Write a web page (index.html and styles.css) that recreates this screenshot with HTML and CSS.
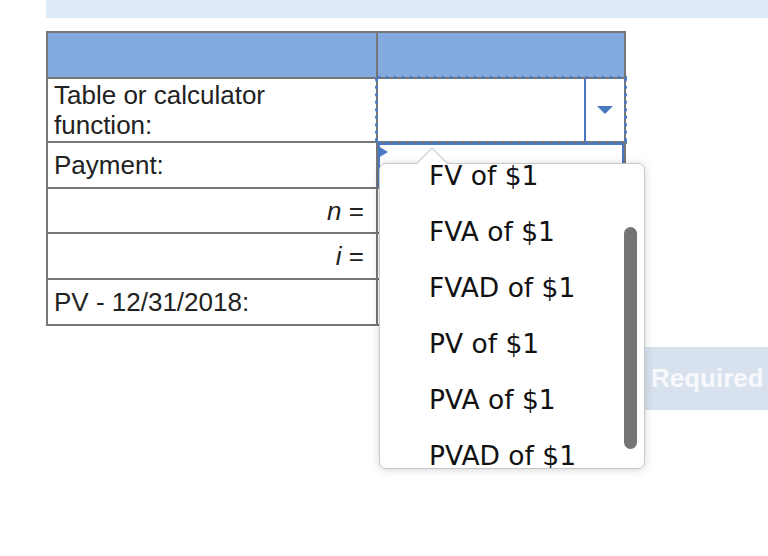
FILE: index.html
```html
<!DOCTYPE html>
<html>
<head>
<meta charset="utf-8">
<link rel="stylesheet" href="styles.css">
</head>
<body>
<div class="band"></div>
<div class="main">
  <div class="sheet">
    <div class="cell head"></div>
    <div class="cell head"></div>

    <div class="cell label">Table or calculator<br>function:</div>
    <div class="cell field top">
      <div class="select">
        <div class="select-value"></div>
        <div class="select-arrow"><span class="tri"></span></div>
        <span class="focus-ring"></span>
      </div>
    </div>

    <div class="cell label">Payment:</div>
    <div class="cell field">
      <div class="input active"><span class="flag"></span></div>
    </div>

    <div class="cell label right"><i>n</i>&nbsp;=</div>
    <div class="cell field"></div>

    <div class="cell label right"><i>i</i>&nbsp;=</div>
    <div class="cell field"></div>

    <div class="cell label">PV - 12/31/2018:</div>
    <div class="cell field"></div>
  </div>
  <button class="required">Required</button>
</div>

<div class="dropdown">
  <span class="caret"></span>
  <ul class="options">
    <li>FV of $1</li>
    <li>FVA of $1</li>
    <li>FVAD of $1</li>
    <li>PV of $1</li>
    <li>PVA of $1</li>
    <li>PVAD of $1</li>
  </ul>
  <span class="thumb"></span>
</div>
</body>
</html>
```

FILE: styles.css
```css
html, body {
  margin: 0;
  padding: 0;
  overflow: hidden;
  background: #ffffff;
}

body {
  width: 768px;
  height: 556px;
  font-family: "Liberation Sans", Arial, sans-serif;
}

.band {
  margin-left: 46px;
  height: 18px;
  background: #deebf7;
}

.main {
  display: flex;
  align-items: flex-start;
  margin-top: 13px;
}

.sheet {
  flex-shrink: 0;
  margin-left: 46px;
  display: grid;
  grid-template-columns: 330px 248px;
  grid-template-rows: 46px 64px 46px 45px 46px 46px;
  border-top: 2px solid #767676;
  border-left: 2px solid #767676;
}

.cell {
  box-sizing: border-box;
  border-right: 2px solid #767676;
  border-bottom: 2px solid #767676;
  background: #ffffff;
}

.head {
  background: #82aadf;
}

.label {
  display: flex;
  align-items: center;
  padding: 0 6px;
  font-size: 26px;
  line-height: 30px;
  color: #222222;
}

.label.right {
  justify-content: flex-end;
  padding-right: 12px;
}

.field {
  position: relative;
}

.field.top {
  z-index: 2;
}

.select {
  position: relative;
  display: flex;
  height: 100%;
  background: #ffffff;
}

.focus-ring {
  position: absolute;
  left: -3px;
  top: -3px;
  width: 252px;
  height: 68px;
  pointer-events: none;
  background:
    radial-gradient(circle, #4a78c2 1.4px, rgba(74, 120, 194, 0) 2px) left top / 8px 3px repeat-x,
    radial-gradient(circle, #4a78c2 1.4px, rgba(74, 120, 194, 0) 2px) left bottom / 8px 3px repeat-x,
    radial-gradient(circle, #4a78c2 1.4px, rgba(74, 120, 194, 0) 2px) left top / 3px 7.5px repeat-y,
    radial-gradient(circle, #4a78c2 1.4px, rgba(74, 120, 194, 0) 2px) right top / 3px 7.5px repeat-y;
}

.select-value {
  flex: 1;
}

.select-arrow {
  width: 38px;
  border-left: 2px solid #4a78c2;
  display: flex;
  align-items: center;
  justify-content: center;
}

.tri {
  width: 0;
  height: 0;
  border-left: 8px solid transparent;
  border-right: 8px solid transparent;
  border-top: 8px solid #4a78c2;
}

.input {
  position: relative;
  box-sizing: border-box;
  height: 100%;
  border: 2px solid #4a78c2;
  border-bottom: none;
}

.flag {
  position: absolute;
  left: -2px;
  top: 1px;
  width: 0;
  height: 0;
  border-top: 6px solid transparent;
  border-bottom: 6px solid transparent;
  border-left: 10px solid #4a78c2;
}

.required {
  flex-shrink: 0;
  margin-left: 14px;
  margin-top: 316px;
  width: 150px;
  height: 63px;
  padding: 0 0 0 11px;
  border: none;
  background: #d8e2ef;
  color: #f6f8fb;
  font-family: "Liberation Sans", Arial, sans-serif;
  font-weight: bold;
  font-size: 26px;
  text-align: left;
}

.dropdown {
  position: absolute;
  z-index: 3;
  left: 379px;
  top: 163px;
  box-sizing: border-box;
  width: 266px;
  height: 306px;
  border: 1px solid #c6c6c6;
  border-radius: 7px;
  background: #ffffff;
  box-shadow: 0 1px 10px rgba(0, 0, 0, 0.16);
}

.options {
  position: relative;
  z-index: 1;
  list-style: none;
  margin: 0;
  padding: 0;
  height: 100%;
  overflow: hidden;
  border-radius: 6px;
}

.options li {
  height: 56px;
  line-height: 56px;
  padding-left: 49px;
  font-family: "DejaVu Sans", Verdana, sans-serif;
  font-size: 26.5px;
  color: #111111;
  white-space: nowrap;
}

.options li:first-child {
  margin-top: -16px;
}

.thumb {
  position: absolute;
  z-index: 2;
  left: 244px;
  top: 63px;
  width: 13px;
  height: 222px;
  border-radius: 7px;
  background: #757575;
}

.caret {
  position: absolute;
  left: 41px;
  top: -12px;
  width: 22px;
  height: 22px;
  background: #ffffff;
  border-top: 1px solid #c6c6c6;
  border-left: 1px solid #c6c6c6;
  box-sizing: border-box;
  transform: rotate(45deg);
}
```
